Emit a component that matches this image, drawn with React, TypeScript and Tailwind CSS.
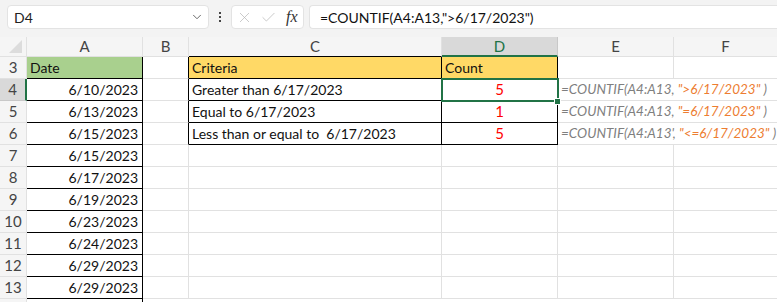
import { ChevronDown, X, Check } from 'lucide-react';

const dates = [
  '6/10/2023',
  '6/13/2023',
  '6/15/2023',
  '6/15/2023',
  '6/17/2023',
  '6/19/2023',
  '6/23/2023',
  '6/24/2023',
  '6/29/2023',
  '6/29/2023',
];

const criteria = [
  { text: 'Greater than 6/17/2023', count: '5', pre: '=COUNTIF(A4:A13, ', arg: '">6/17/2023"' },
  { text: 'Equal to 6/17/2023', count: '1', pre: '=COUNTIF(A4:A13, ', arg: '"=6/17/2023"' },
  { text: 'Less than or equal to  6/17/2023', count: '5', pre: "=COUNTIF(A4:A13', ", arg: '"<=6/17/2023"' },
];

const grid = 'border-[#e1e1e1]';

function FormulaBar() {
  return (
    <div className="h-[37px] bg-[#f3f3f3] flex items-start pt-[5px] pl-[7px]">
      <div className="w-[202px] shrink-0 h-[24px] bg-white border border-[#e3e3e3] rounded-[4px] flex items-center justify-between pl-[6px] pr-[4px] text-[14px] text-[#222]">
        <span>D4</span>
        <ChevronDown size={14} strokeWidth={1.5} className="text-[#555]" />
      </div>
      <div className="w-[22px] shrink-0 h-[24px] flex flex-col items-center justify-center gap-[2px]">
        <span className="w-[2px] h-[2px] bg-[#444]" />
        <span className="w-[2px] h-[2px] bg-[#444]" />
        <span className="w-[2px] h-[2px] bg-[#444]" />
      </div>
      <div className="w-[73px] shrink-0 h-[24px] bg-white border border-[#e3e3e3] rounded-[4px] flex items-center pl-[4px] gap-[7px]">
        <X size={17} strokeWidth={1} className="text-[#b5b5b5]" />
        <Check size={17} strokeWidth={1} className="text-[#b5b5b5]" />
        <span className="ml-[2px] text-[16px] italic text-[#333]" style={{ fontFamily: '"Liberation Serif", serif' }}>
          fx
        </span>
      </div>
      <div className="flex-1 ml-[5px] h-[24px] bg-white border border-r-0 border-[#e3e3e3] rounded-l-[4px] flex items-center pl-[10px] text-[14px] text-[#111]">
        =COUNTIF(A4:A13,"&gt;6/17/2023")
      </div>
    </div>
  );
}

function ColHeader() {
  const cols = [
    { l: 'A', w: 'w-[116px]' },
    { l: 'B', w: 'w-[46px]' },
    { l: 'C', w: 'w-[253px]' },
  ];
  return (
    <div className="h-[20px] flex bg-[#f5f5f5] text-[#444] text-[15px]">
      <div className={`w-[27px] shrink-0 h-full border-r border-b ${grid} relative`}>
        <div className="absolute right-[4px] bottom-[3px] w-0 h-0 border-l-[13px] border-l-transparent border-b-[13px] border-b-[#dcdcdc]" />
      </div>
      {cols.map((c) => (
        <div
          key={c.l}
          className={`${c.w} shrink-0 h-full border-r ${grid} flex items-center justify-center ${
            c.l === 'C' ? 'border-b border-b-black' : 'border-b'
          }`}
        >
          {c.l}
        </div>
      ))}
      <div className="w-[116px] shrink-0 h-full bg-[#d9d9d9] border-r border-[#c8c8c8] border-b-2 border-b-[#217346] flex items-center justify-center text-[#217346]">
        D
      </div>
      <div className={`w-[116px] shrink-0 h-full border-r border-b ${grid} flex items-center justify-center`}>E</div>
      <div className={`flex-1 h-full border-b ${grid} flex items-center justify-center`}>F</div>
    </div>
  );
}

function RowHead({ n, active }: { n?: number; active?: boolean }) {
  return (
    <div
      className={`w-[27px] shrink-0 h-full flex items-center justify-center text-[15px] ${
        active
          ? 'bg-[#d9d9d9] border-r-2 border-r-[#217346] border-b border-b-[#c8c8c8] text-[#444]'
          : `bg-[#f5f5f5] border-r border-b ${grid} text-[#444]`
      }`}
    >
      {n}
    </div>
  );
}

export default function App() {
  return (
    <div
      className="w-[777px] h-[302px] overflow-hidden bg-white text-[#111]"
      style={{ fontFamily: 'Lato, "Liberation Sans", sans-serif' }}
    >
      <FormulaBar />
      <ColHeader />
      <div className="relative">
        {/* row 3 */}
        <div className="h-[22px] flex text-[14px]">
          <RowHead n={3} />
          <div className="w-[116px] shrink-0 h-full bg-[#a9d08e] border-r border-b border-black flex items-center pl-[3px]">Date</div>
          <div className={`w-[46px] shrink-0 h-full border-r border-b ${grid} border-r-black`} />
          <div className="w-[253px] shrink-0 h-full bg-[#ffd966] border-r border-b border-black flex items-center pl-[3px]">Criteria</div>
          <div className="w-[116px] shrink-0 h-full bg-[#ffd966] border-r border-b border-black flex items-center pl-[3px]">Count</div>
          <div className={`w-[116px] shrink-0 h-full border-r border-b ${grid}`} />
          <div className={`flex-1 h-full border-b ${grid}`} />
        </div>
        {dates.map((d, i) => {
          const row = i + 4;
          const c = criteria[i];
          return (
            <div key={row} className="h-[22px] flex text-[14px]">
              <RowHead n={row} active={row === 4} />
              <div className="w-[116px] shrink-0 h-full border-r border-b border-black flex items-center justify-end pr-[4px]">{d}</div>
              <div className={`w-[46px] shrink-0 h-full border-r border-b ${grid} ${c ? 'border-r-black' : ''}`} />
              {c ? (
                <>
                  <div className="w-[253px] shrink-0 h-full border-r border-b border-black flex items-center pl-[3px] whitespace-pre">{c.text}</div>
                  <div className="w-[116px] shrink-0 h-full border-r border-b border-black flex items-center justify-center text-[#ff0000] text-[15px]">{c.count}</div>
                  <div className={`flex-1 min-w-0 h-full border-b ${grid} flex items-center pl-[3px] italic text-[13.5px] text-[#7f7f7f] whitespace-pre`}>
                    {c.pre}
                    <span className="text-[#ed7d31]">{c.arg}</span> )
                  </div>
                </>
              ) : (
                <>
                  <div className={`w-[253px] shrink-0 h-full border-r border-b ${grid}`} />
                  <div className={`w-[116px] shrink-0 h-full border-r border-b ${grid}`} />
                  <div className={`w-[116px] shrink-0 h-full border-r border-b ${grid}`} />
                  <div className={`flex-1 h-full border-b ${grid}`} />
                </>
              )}
            </div>
          );
        })}
        <div className="h-[22px] flex">
          <RowHead />
          <div className="w-[116px] shrink-0 h-full border-r border-black" />
        </div>
        {/* active cell D4 */}
        <div className="absolute left-[441px] top-[21px] w-[118px] h-[24px] border-2 border-[#217346] pointer-events-none" />
        <div className="absolute left-[554px] top-[41px] w-[5px] h-[5px] bg-[#217346] border border-white box-content" />
      </div>
    </div>
  );
}
